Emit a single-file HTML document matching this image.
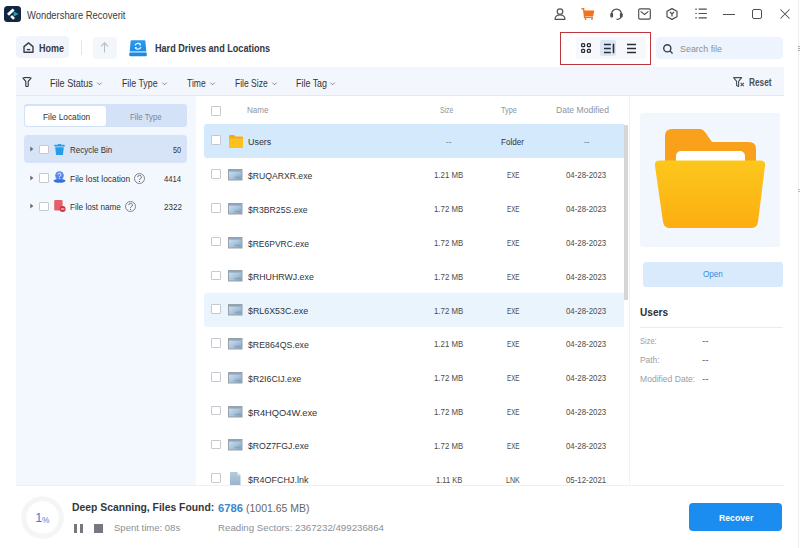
<!DOCTYPE html><html><head><meta charset="utf-8"><style>
*{margin:0;padding:0;box-sizing:border-box}
html,body{width:800px;height:548px;overflow:hidden;background:#fff}
body{position:relative;font-family:"Liberation Sans",sans-serif;color:#333}
.a{position:absolute}
.t{position:absolute;white-space:nowrap;line-height:1;transform-origin:0 0}
svg{position:absolute;overflow:visible}
.cb{position:absolute;width:9.5px;height:9.5px;border:1px solid #c6cad0;border-radius:1px;background:#fff}
</style></head><body>
<div class="a" style="left:4px;top:6px;width:17px;height:16px;background:#0f2743;border-radius:3.5px"></div>
<svg style="left:4px;top:6px" width="17" height="16" viewBox="0 0 17 16"><path d="M9.6 10.4 L14.6 8 L9.6 5.4 Z" fill="#2f9db0"/><path d="M3 7.8 L8.6 2.4 L10.6 4.4 L5 9.8 Z" fill="#fff"/><path d="M6.2 10.9 L8 9.1 L11 12 L9.2 13.8 Z" fill="#fff"/></svg>
<div class="t" style="left:27.10px;top:10.01px;font-size:10.58px;font-weight:normal;color:#3a3a3a;transform:scaleX(0.8875)">Wondershare Recoverit</div>
<svg style="left:554px;top:8px" width="12" height="12" viewBox="0 0 12 12" fill="none" stroke="#4d4d4d" stroke-width="1.15"><circle cx="6" cy="3.6" r="2.8"/><path d="M1 11.3 C1 8.2 3 7 6 7 C9 7 11 8.2 11 11.3 Z" stroke-linejoin="round"/></svg>
<svg style="left:581px;top:8px" width="14" height="12" viewBox="0 0 14 12"><path d="M0.5 0.8 L2.6 0.8 L3.6 9.2 L12 9.2" fill="none" stroke="#f2711c" stroke-width="1.4"/><path d="M3 2.5 L13.3 2.5 L12.2 8 L3.6 8 Z" fill="#f2711c"/><circle cx="4.5" cy="11" r="0.9" fill="#f2711c"/><circle cx="11" cy="11" r="0.9" fill="#f2711c"/></svg>
<svg style="left:610px;top:8px" width="13" height="12" viewBox="0 0 13 12" fill="none" stroke="#4d4d4d" stroke-width="1.2"><path d="M1.6 7 L1.6 6 A4.9 4.9 0 0 1 11.4 6 L11.4 7"/><rect x="0.9" y="5.6" width="1.6" height="3.2" rx="0.6" fill="#4d4d4d"/><rect x="10.5" y="5.6" width="1.6" height="3.2" rx="0.6" fill="#4d4d4d"/><path d="M11 8.8 C10.5 10.8 9 11.3 6.5 11.3"/></svg>
<svg style="left:638px;top:8px" width="13" height="12" viewBox="0 0 13 12" fill="none" stroke="#4d4d4d" stroke-width="1.15"><rect x="0.7" y="0.9" width="11.6" height="10.2" rx="1.3"/><path d="M2.6 3.4 L6.5 6.4 L10.4 3.4"/></svg>
<svg style="left:666px;top:8px" width="12" height="12" viewBox="0 0 12 12" fill="none" stroke="#4d4d4d" stroke-width="1.2"><path d="M6 0.6 L11 3.3 L11 8.7 L6 11.4 L1 8.7 L1 3.3 Z" stroke-linejoin="round"/><path d="M4 4 L6 6 L8 4 M6 6 L6 8.6"/></svg>
<svg style="left:695px;top:8px" width="12" height="11" viewBox="0 0 12 11" fill="none" stroke="#4d4d4d" stroke-width="1.2"><path d="M3.6 1.2 H11.8 M3.6 5.5 H11.8 M3.6 9.8 H11.8"/><path d="M0.3 1.2 H1.8 M0.3 5.5 H1.8 M0.3 9.8 H1.8"/></svg>
<div class="a" style="left:723px;top:13.6px;width:11.5px;height:1.1px;background:#505050"></div>
<div class="a" style="left:752px;top:9px;width:10px;height:9.6px;border:1.15px solid #505050;border-radius:2px"></div>
<svg style="left:780px;top:9px" width="10" height="10" viewBox="0 0 10 10" fill="none" stroke="#505050" stroke-width="1.05"><path d="M0.5 0.5 L9.5 9.5 M9.5 0.5 L0.5 9.5"/></svg>
<div class="a" style="left:798px;top:0;width:1px;height:548px;background:#f0f0f0"></div>
<div class="a" style="left:798px;top:46px;width:2px;height:1px;background:#aaa"></div><div class="a" style="left:798px;top:48px;width:2px;height:1px;background:#aaa"></div><div class="a" style="left:798px;top:50px;width:2px;height:1px;background:#aaa"></div>
<div class="a" style="left:798px;top:189px;width:2px;height:1px;background:#bbb"></div><div class="a" style="left:798px;top:191px;width:2px;height:1px;background:#bbb"></div>
<div class="a" style="left:16px;top:36px;width:53px;height:22px;background:#f1f4fb;border-radius:4px"></div>
<svg style="left:23px;top:42px" width="11" height="11" viewBox="0 0 11 11" fill="none" stroke="#3a3f47" stroke-width="1.4" stroke-linejoin="round"><path d="M1 4.6 L5.5 0.9 L10 4.6 L10 10.2 L1 10.2 Z"/><path d="M3.8 7.6 H7.2"/></svg>
<div class="t" style="left:38.70px;top:43.78px;font-size:10.14px;font-weight:bold;color:#353a40;transform:scaleX(0.8877)">Home</div>
<div class="a" style="left:81px;top:40px;width:1px;height:15px;background:#e3e6ea"></div>
<div class="a" style="left:93px;top:37px;width:24px;height:22px;background:#f3f6fb;border-radius:4px"></div>
<svg style="left:100px;top:42px" width="9" height="11" viewBox="0 0 9 11" fill="none" stroke="#b9bec6" stroke-width="1.1"><path d="M4.5 10.5 V1 M1 4.3 L4.5 0.8 L8 4.3"/></svg>
<svg style="left:129px;top:39.5px" width="18" height="17" viewBox="0 0 18 17"><defs><linearGradient id="dg" x1="0" y1="0" x2="0" y2="1"><stop offset="0" stop-color="#2a9af0"/><stop offset="1" stop-color="#1d8ae6"/></linearGradient></defs><path d="M2.6 0.2 H15.4 Q16.2 0.2 16.4 1 L17.3 11.6 H0.7 L1.6 1 Q1.8 0.2 2.6 0.2 Z" fill="url(#dg)"/><rect x="0.7" y="11.6" width="16.6" height="0.8" fill="#9fe3fb"/><rect x="0.2" y="12.6" width="17.6" height="3.6" rx="1.2" fill="#1e8ae4"/><path d="M6.1 5.4 A3 3 0 0 1 11.6 4.8 M11.9 7 A3 3 0 0 1 6.4 7.6" fill="none" stroke="#dff3ff" stroke-width="1.3"/><path d="M11.9 3.2 L12.1 5.5 L9.8 5.3 Z M6.1 9.2 L5.9 6.9 L8.2 7.1 Z" fill="#dff3ff"/></svg>
<div class="t" style="left:155.30px;top:43.78px;font-size:10.14px;font-weight:bold;color:#33373d;transform:scaleX(0.8978)">Hard Drives and Locations</div>
<div class="a" style="left:560px;top:32.2px;width:91px;height:33px;border:1.8px solid #bf353c"></div>
<div class="a" style="left:576px;top:37px;width:70px;height:22px;background:#f6f8fc;border-radius:3px"></div>
<div class="a" style="left:600px;top:40px;width:16px;height:16px;background:#dde5f8;border-radius:2px"></div>
<svg style="left:581px;top:43px" width="10" height="10" viewBox="0 0 10 10" fill="none" stroke="#2a2e33" stroke-width="1.3"><rect x="0.6" y="0.6" width="3" height="3" rx="0.9"/><rect x="6.4" y="0.6" width="3" height="3" rx="0.9"/><rect x="0.6" y="6.4" width="3" height="3" rx="0.9"/><rect x="6.4" y="6.4" width="3" height="3" rx="0.9"/></svg>
<svg style="left:604px;top:43.5px" width="11" height="10" viewBox="0 0 11 10" fill="none" stroke="#2a2e33" stroke-width="1.45"><path d="M0 0.5 H6.8 M0 4.5 H6.8 M0 8.5 H6.8"/><path d="M9.5 -0.3 V9.3" stroke-width="1.6"/></svg>
<svg style="left:627px;top:43.5px" width="10" height="10" viewBox="0 0 10 10" fill="none" stroke="#2a2e33" stroke-width="1.45"><path d="M0 0.5 H9 M0 4.5 H9 M0 8.5 H9"/></svg>
<div class="a" style="left:656px;top:37px;width:127px;height:22px;background:#eef4fd;border-radius:4px"></div>
<svg style="left:663px;top:44px" width="11" height="10" viewBox="0 0 11 10" fill="none" stroke="#3a3f47" stroke-width="1.4"><circle cx="4.3" cy="4.3" r="3.6"/><path d="M7 7 L9.6 9.4"/></svg>
<div class="t" style="left:679.75px;top:44.41px;font-size:9.93px;font-weight:normal;color:#8a8f96;transform:scaleX(0.8963)">Search file</div>
<div class="a" style="left:16px;top:67px;width:768px;height:29px;background:#f3f7fd"></div>
<div class="a" style="left:16px;top:95px;width:768px;height:1px;background:#e4e9f1"></div>
<svg style="left:22px;top:77px" width="10" height="10" viewBox="0 0 10 10" fill="none" stroke="#2f3338" stroke-width="1.1" stroke-linejoin="round"><path d="M0.6 0.6 L3.8 4.4 V8.9 Q3.8 9.5 4.4 9.5 H5.6 Q6.2 9.5 6.2 8.9 V4.4 L9.4 0.6"/><path d="M1.6 0.6 H8.4"/></svg>
<div class="t" style="left:49.60px;top:78.98px;font-size:10.14px;font-weight:normal;color:#333;transform:scaleX(0.8960)">File Status</div>
<svg style="left:96.6px;top:81.6px" width="5" height="3.5" viewBox="0 0 5 3.5" fill="none" stroke="#777" stroke-width="0.9"><path d="M0.3 0.6 L2.5 2.8 L4.7 0.6"/></svg>
<div class="t" style="left:122.00px;top:78.98px;font-size:10.14px;font-weight:normal;color:#333;transform:scaleX(0.8686)">File Type</div>
<svg style="left:161.6px;top:81.6px" width="5" height="3.5" viewBox="0 0 5 3.5" fill="none" stroke="#777" stroke-width="0.9"><path d="M0.3 0.6 L2.5 2.8 L4.7 0.6"/></svg>
<div class="t" style="left:187.00px;top:78.98px;font-size:10.14px;font-weight:normal;color:#333;transform:scaleX(0.8447)">Time</div>
<svg style="left:210px;top:81.6px" width="5" height="3.5" viewBox="0 0 5 3.5" fill="none" stroke="#777" stroke-width="0.9"><path d="M0.3 0.6 L2.5 2.8 L4.7 0.6"/></svg>
<div class="t" style="left:235.00px;top:78.98px;font-size:10.14px;font-weight:normal;color:#333;transform:scaleX(0.8420)">File Size</div>
<svg style="left:271.6px;top:81.6px" width="5" height="3.5" viewBox="0 0 5 3.5" fill="none" stroke="#777" stroke-width="0.9"><path d="M0.3 0.6 L2.5 2.8 L4.7 0.6"/></svg>
<div class="t" style="left:296.40px;top:78.98px;font-size:10.14px;font-weight:normal;color:#333;transform:scaleX(0.8788)">File Tag</div>
<svg style="left:330.4px;top:81.6px" width="5" height="3.5" viewBox="0 0 5 3.5" fill="none" stroke="#777" stroke-width="0.9"><path d="M0.3 0.6 L2.5 2.8 L4.7 0.6"/></svg>
<svg style="left:733px;top:77px" width="12" height="10" viewBox="0 0 12 10" fill="none" stroke="#4a4f57" stroke-width="1.1" stroke-linejoin="round"><path d="M0.6 0.6 H8.6 L5.6 4.4 V9.4 L3.6 8.4 V4.4 Z"/><path d="M7.6 5.8 L10.8 9.2 M10.8 5.8 L7.6 9.2"/></svg>
<div class="t" style="left:749.20px;top:77.98px;font-size:10.14px;font-weight:bold;color:#4a4f57;transform:scaleX(0.8190)">Reset</div>
<div class="a" style="left:16px;top:96px;width:180px;height:389px;background:#f3f8fe"></div>
<div class="a" style="left:24px;top:104px;width:163px;height:23px;background:#d4e2f8;border-radius:3px"></div>
<div class="a" style="left:25px;top:105.5px;width:80.5px;height:20px;background:#fff;border-radius:3px"></div>
<div class="t" style="left:42.50px;top:112.22px;font-size:9.86px;font-weight:normal;color:#2f3338;transform:scaleX(0.8448)">File Location</div>
<div class="t" style="left:129.50px;top:112.22px;font-size:9.86px;font-weight:normal;color:#7d8696;transform:scaleX(0.7970)">File Type</div>
<div class="a" style="left:24px;top:135px;width:163px;height:28px;background:#d7e4f8;border-radius:4px"></div>
<svg style="left:29.8px;top:146.1px" width="4" height="6" viewBox="0 0 4 6"><path d="M0.3 0.5 L3.3 3 L0.3 5.5 Z" fill="#666"/></svg>
<div class="cb" style="left:39px;top:144.5px"></div>
<div class="t" style="left:69.50px;top:145.42px;font-size:9.86px;font-weight:normal;color:#2f3338;transform:scaleX(0.8117)">Recycle Bin</div>
<div class="t" style="left:172.50px;top:145.42px;font-size:9.86px;font-weight:normal;color:#2f3338;transform:scaleX(0.7408)">50</div>
<svg style="left:29.8px;top:174.6px" width="4" height="6" viewBox="0 0 4 6"><path d="M0.3 0.5 L3.3 3 L0.3 5.5 Z" fill="#666"/></svg>
<div class="cb" style="left:39px;top:173px"></div>
<div class="t" style="left:69.50px;top:173.92px;font-size:9.86px;font-weight:normal;color:#2f3338;transform:scaleX(0.8530)">File lost location</div>
<div class="t" style="left:163.50px;top:173.92px;font-size:9.86px;font-weight:normal;color:#2f3338;transform:scaleX(0.7804)">4414</div>
<svg style="left:133.8px;top:172.5px" width="11" height="11" viewBox="0 0 11 11"><circle cx="5.5" cy="5.5" r="5" fill="none" stroke="#777" stroke-width="0.9"/><path d="M3.8 4.2 A1.8 1.8 0 1 1 6.2 5.8 C5.6 6.1 5.5 6.4 5.5 7" fill="none" stroke="#666" stroke-width="0.9"/><circle cx="5.5" cy="8.4" r="0.6" fill="#666"/></svg>
<svg style="left:29.8px;top:203.1px" width="4" height="6" viewBox="0 0 4 6"><path d="M0.3 0.5 L3.3 3 L0.3 5.5 Z" fill="#666"/></svg>
<div class="cb" style="left:39px;top:201.5px"></div>
<div class="t" style="left:69.50px;top:202.42px;font-size:9.86px;font-weight:normal;color:#2f3338;transform:scaleX(0.8293)">File lost name</div>
<div class="t" style="left:163.50px;top:202.42px;font-size:9.86px;font-weight:normal;color:#2f3338;transform:scaleX(0.8168)">2322</div>
<svg style="left:125px;top:201px" width="11" height="11" viewBox="0 0 11 11"><circle cx="5.5" cy="5.5" r="5" fill="none" stroke="#777" stroke-width="0.9"/><path d="M3.8 4.2 A1.8 1.8 0 1 1 6.2 5.8 C5.6 6.1 5.5 6.4 5.5 7" fill="none" stroke="#666" stroke-width="0.9"/><circle cx="5.5" cy="8.4" r="0.6" fill="#666"/></svg>
<svg style="left:54px;top:144px" width="11" height="11" viewBox="0 0 11 11"><rect x="0.3" y="0.8" width="10.4" height="1.8" rx="0.5" fill="#2a9be8"/><rect x="4" y="0" width="3" height="1.2" fill="#2a9be8"/><path d="M1.2 3.3 H9.8 L9 10.4 Q8.9 11 8.2 11 H2.8 Q2.1 11 2 10.4 Z" fill="#2a9be8"/></svg>
<svg style="left:53px;top:171px" width="13" height="12" viewBox="0 0 13 12"><ellipse cx="6.5" cy="9.8" rx="6" ry="2" fill="#3a6fd8"/><circle cx="6.5" cy="4.6" r="4.3" fill="#5a86e6"/><path d="M5 3.7 A1.5 1.5 0 1 1 7 5 C6.6 5.2 6.5 5.5 6.5 6" fill="none" stroke="#fff" stroke-width="0.9"/><circle cx="6.5" cy="7.2" r="0.5" fill="#fff"/></svg>
<svg style="left:54px;top:200px" width="12" height="12" viewBox="0 0 12 12"><rect x="0.2" y="0" width="8.4" height="10.6" rx="1" fill="#e4606a"/><circle cx="8.6" cy="9" r="3" fill="#d0333f"/><rect x="6.9" y="8.5" width="3.4" height="1" fill="#fff"/></svg>
<div class="cb" style="left:211px;top:106px"></div>
<div class="t" style="left:247.00px;top:105.22px;font-size:9.86px;font-weight:normal;color:#8e949c;transform:scaleX(0.8214)">Name</div>
<div class="t" style="left:439.50px;top:105.22px;font-size:9.86px;font-weight:normal;color:#8e949c;transform:scaleX(0.6862)">Size</div>
<div class="t" style="left:501.25px;top:105.22px;font-size:9.86px;font-weight:normal;color:#8e949c;transform:scaleX(0.7432)">Type</div>
<div class="t" style="left:555.50px;top:105.22px;font-size:9.86px;font-weight:normal;color:#8e949c;transform:scaleX(0.8712)">Date Modified</div>
<div class="a" style="left:204px;top:124px;width:420px;height:34px;background:#d4eafc;border-radius:3px 0 0 3px"></div>
<div class="a" style="left:204px;top:293px;width:420px;height:34px;background:#e9f4fd;border-radius:3px 0 0 3px"></div>
<div class="cb" style="left:211px;top:135.4px"></div>
<svg style="left:228.5px;top:134.5px" width="14" height="13" viewBox="0 0 14 13"><path d="M0 1 Q0 0 1 0 H5 L6.5 1.6 H13 Q14 1.6 14 2.6 V12 Q14 13 13 13 H1 Q0 13 0 12 Z" fill="#f7a81b"/><path d="M0 3.6 H14 V12 Q14 13 13 13 H1 Q0 13 0 12 Z" fill="#fcc21b"/></svg>
<div class="t" style="left:248.00px;top:137.11px;font-size:9.93px;font-weight:normal;color:#2f3338;transform:scaleX(0.8979)">Users</div>
<div class="t" style="left:445.93px;top:137.69px;font-size:8.48px;font-weight:normal;color:#777;transform:scaleX(0.9879)">--</div>
<div class="t" style="left:501.27px;top:137.69px;font-size:8.48px;font-weight:normal;color:#333;transform:scaleX(0.9614)">Folder</div>
<div class="t" style="left:583.62px;top:137.69px;font-size:8.48px;font-weight:normal;color:#777;transform:scaleX(0.9879)">--</div>
<div class="cb" style="left:211px;top:169.2px"></div>
<svg style="left:228px;top:169px" width="14.5" height="11.5" viewBox="0 0 14.5 11.5"><defs><linearGradient id="eg1" x1="0" y1="0" x2="1" y2="1"><stop offset="0" stop-color="#d3e3f2"/><stop offset="0.55" stop-color="#a9c4dc"/><stop offset="1" stop-color="#7d9dbb"/></linearGradient></defs><rect x="0.5" y="0.5" width="13.5" height="10.5" fill="url(#eg1)" stroke="#98a2ab" stroke-width="1"/><rect x="1" y="1" width="12.5" height="1.6" fill="#8ea6bd"/><rect x="6.5" y="7.6" width="6" height="1.6" fill="#7f97ad" opacity="0.6"/></svg>
<div class="t" style="left:248.00px;top:170.91px;font-size:9.93px;font-weight:normal;color:#2f3338;transform:scaleX(0.8700)">$RUQARXR.exe</div>
<div class="t" style="left:434.05px;top:171.49px;font-size:8.48px;font-weight:normal;color:#4d4d4d;transform:scaleX(0.9251)">1.21 MB</div>
<div class="t" style="left:506.50px;top:171.49px;font-size:8.48px;font-weight:normal;color:#4d4d4d;transform:scaleX(0.7400)">EXE</div>
<div class="t" style="left:566.30px;top:171.49px;font-size:8.48px;font-weight:normal;color:#4d4d4d;transform:scaleX(0.9264)">04-28-2023</div>
<div class="cb" style="left:211px;top:203px"></div>
<svg style="left:228px;top:202.8px" width="14.5" height="11.5" viewBox="0 0 14.5 11.5"><defs><linearGradient id="eg2" x1="0" y1="0" x2="1" y2="1"><stop offset="0" stop-color="#d3e3f2"/><stop offset="0.55" stop-color="#a9c4dc"/><stop offset="1" stop-color="#7d9dbb"/></linearGradient></defs><rect x="0.5" y="0.5" width="13.5" height="10.5" fill="url(#eg2)" stroke="#98a2ab" stroke-width="1"/><rect x="1" y="1" width="12.5" height="1.6" fill="#8ea6bd"/><rect x="6.5" y="7.6" width="6" height="1.6" fill="#7f97ad" opacity="0.6"/></svg>
<div class="t" style="left:248.00px;top:204.71px;font-size:9.93px;font-weight:normal;color:#2f3338;transform:scaleX(0.8712)">$R3BR25S.exe</div>
<div class="t" style="left:434.05px;top:205.29px;font-size:8.48px;font-weight:normal;color:#4d4d4d;transform:scaleX(0.9251)">1.72 MB</div>
<div class="t" style="left:506.50px;top:205.29px;font-size:8.48px;font-weight:normal;color:#4d4d4d;transform:scaleX(0.7400)">EXE</div>
<div class="t" style="left:566.30px;top:205.29px;font-size:8.48px;font-weight:normal;color:#4d4d4d;transform:scaleX(0.9264)">04-28-2023</div>
<div class="cb" style="left:211px;top:236.8px"></div>
<svg style="left:228px;top:236.6px" width="14.5" height="11.5" viewBox="0 0 14.5 11.5"><defs><linearGradient id="eg3" x1="0" y1="0" x2="1" y2="1"><stop offset="0" stop-color="#d3e3f2"/><stop offset="0.55" stop-color="#a9c4dc"/><stop offset="1" stop-color="#7d9dbb"/></linearGradient></defs><rect x="0.5" y="0.5" width="13.5" height="10.5" fill="url(#eg3)" stroke="#98a2ab" stroke-width="1"/><rect x="1" y="1" width="12.5" height="1.6" fill="#8ea6bd"/><rect x="6.5" y="7.6" width="6" height="1.6" fill="#7f97ad" opacity="0.6"/></svg>
<div class="t" style="left:248.00px;top:238.51px;font-size:9.93px;font-weight:normal;color:#2f3338;transform:scaleX(0.8573)">$RE6PVRC.exe</div>
<div class="t" style="left:434.05px;top:239.09px;font-size:8.48px;font-weight:normal;color:#4d4d4d;transform:scaleX(0.9251)">1.72 MB</div>
<div class="t" style="left:506.50px;top:239.09px;font-size:8.48px;font-weight:normal;color:#4d4d4d;transform:scaleX(0.7400)">EXE</div>
<div class="t" style="left:566.30px;top:239.09px;font-size:8.48px;font-weight:normal;color:#4d4d4d;transform:scaleX(0.9264)">04-28-2023</div>
<div class="cb" style="left:211px;top:270.6px"></div>
<svg style="left:228px;top:270.4px" width="14.5" height="11.5" viewBox="0 0 14.5 11.5"><defs><linearGradient id="eg4" x1="0" y1="0" x2="1" y2="1"><stop offset="0" stop-color="#d3e3f2"/><stop offset="0.55" stop-color="#a9c4dc"/><stop offset="1" stop-color="#7d9dbb"/></linearGradient></defs><rect x="0.5" y="0.5" width="13.5" height="10.5" fill="url(#eg4)" stroke="#98a2ab" stroke-width="1"/><rect x="1" y="1" width="12.5" height="1.6" fill="#8ea6bd"/><rect x="6.5" y="7.6" width="6" height="1.6" fill="#7f97ad" opacity="0.6"/></svg>
<div class="t" style="left:248.00px;top:272.31px;font-size:9.93px;font-weight:normal;color:#2f3338;transform:scaleX(0.8859)">$RHUHRWJ.exe</div>
<div class="t" style="left:434.05px;top:272.89px;font-size:8.48px;font-weight:normal;color:#4d4d4d;transform:scaleX(0.9251)">1.72 MB</div>
<div class="t" style="left:506.50px;top:272.89px;font-size:8.48px;font-weight:normal;color:#4d4d4d;transform:scaleX(0.7400)">EXE</div>
<div class="t" style="left:566.30px;top:272.89px;font-size:8.48px;font-weight:normal;color:#4d4d4d;transform:scaleX(0.9264)">04-28-2023</div>
<div class="cb" style="left:211px;top:304.4px"></div>
<svg style="left:228px;top:304.2px" width="14.5" height="11.5" viewBox="0 0 14.5 11.5"><defs><linearGradient id="eg5" x1="0" y1="0" x2="1" y2="1"><stop offset="0" stop-color="#d3e3f2"/><stop offset="0.55" stop-color="#a9c4dc"/><stop offset="1" stop-color="#7d9dbb"/></linearGradient></defs><rect x="0.5" y="0.5" width="13.5" height="10.5" fill="url(#eg5)" stroke="#98a2ab" stroke-width="1"/><rect x="1" y="1" width="12.5" height="1.6" fill="#8ea6bd"/><rect x="6.5" y="7.6" width="6" height="1.6" fill="#7f97ad" opacity="0.6"/></svg>
<div class="t" style="left:248.00px;top:306.11px;font-size:9.93px;font-weight:normal;color:#2f3338;transform:scaleX(0.8927)">$RL6X53C.exe</div>
<div class="t" style="left:434.05px;top:306.69px;font-size:8.48px;font-weight:normal;color:#4d4d4d;transform:scaleX(0.9251)">1.72 MB</div>
<div class="t" style="left:506.50px;top:306.69px;font-size:8.48px;font-weight:normal;color:#4d4d4d;transform:scaleX(0.7400)">EXE</div>
<div class="t" style="left:566.30px;top:306.69px;font-size:8.48px;font-weight:normal;color:#4d4d4d;transform:scaleX(0.9264)">04-28-2023</div>
<div class="cb" style="left:211px;top:338.2px"></div>
<svg style="left:228px;top:338px" width="14.5" height="11.5" viewBox="0 0 14.5 11.5"><defs><linearGradient id="eg6" x1="0" y1="0" x2="1" y2="1"><stop offset="0" stop-color="#d3e3f2"/><stop offset="0.55" stop-color="#a9c4dc"/><stop offset="1" stop-color="#7d9dbb"/></linearGradient></defs><rect x="0.5" y="0.5" width="13.5" height="10.5" fill="url(#eg6)" stroke="#98a2ab" stroke-width="1"/><rect x="1" y="1" width="12.5" height="1.6" fill="#8ea6bd"/><rect x="6.5" y="7.6" width="6" height="1.6" fill="#7f97ad" opacity="0.6"/></svg>
<div class="t" style="left:248.00px;top:339.91px;font-size:9.93px;font-weight:normal;color:#2f3338;transform:scaleX(0.8829)">$RE864QS.exe</div>
<div class="t" style="left:434.05px;top:340.49px;font-size:8.48px;font-weight:normal;color:#4d4d4d;transform:scaleX(0.9251)">1.21 MB</div>
<div class="t" style="left:506.50px;top:340.49px;font-size:8.48px;font-weight:normal;color:#4d4d4d;transform:scaleX(0.7400)">EXE</div>
<div class="t" style="left:566.30px;top:340.49px;font-size:8.48px;font-weight:normal;color:#4d4d4d;transform:scaleX(0.9264)">04-28-2023</div>
<div class="cb" style="left:211px;top:372px"></div>
<svg style="left:228px;top:371.8px" width="14.5" height="11.5" viewBox="0 0 14.5 11.5"><defs><linearGradient id="eg7" x1="0" y1="0" x2="1" y2="1"><stop offset="0" stop-color="#d3e3f2"/><stop offset="0.55" stop-color="#a9c4dc"/><stop offset="1" stop-color="#7d9dbb"/></linearGradient></defs><rect x="0.5" y="0.5" width="13.5" height="10.5" fill="url(#eg7)" stroke="#98a2ab" stroke-width="1"/><rect x="1" y="1" width="12.5" height="1.6" fill="#8ea6bd"/><rect x="6.5" y="7.6" width="6" height="1.6" fill="#7f97ad" opacity="0.6"/></svg>
<div class="t" style="left:248.00px;top:373.71px;font-size:9.93px;font-weight:normal;color:#2f3338;transform:scaleX(0.8846)">$R2I6CIJ.exe</div>
<div class="t" style="left:434.05px;top:374.29px;font-size:8.48px;font-weight:normal;color:#4d4d4d;transform:scaleX(0.9251)">1.72 MB</div>
<div class="t" style="left:506.50px;top:374.29px;font-size:8.48px;font-weight:normal;color:#4d4d4d;transform:scaleX(0.7400)">EXE</div>
<div class="t" style="left:566.30px;top:374.29px;font-size:8.48px;font-weight:normal;color:#4d4d4d;transform:scaleX(0.9264)">04-28-2023</div>
<div class="cb" style="left:211px;top:405.8px"></div>
<svg style="left:228px;top:405.6px" width="14.5" height="11.5" viewBox="0 0 14.5 11.5"><defs><linearGradient id="eg8" x1="0" y1="0" x2="1" y2="1"><stop offset="0" stop-color="#d3e3f2"/><stop offset="0.55" stop-color="#a9c4dc"/><stop offset="1" stop-color="#7d9dbb"/></linearGradient></defs><rect x="0.5" y="0.5" width="13.5" height="10.5" fill="url(#eg8)" stroke="#98a2ab" stroke-width="1"/><rect x="1" y="1" width="12.5" height="1.6" fill="#8ea6bd"/><rect x="6.5" y="7.6" width="6" height="1.6" fill="#7f97ad" opacity="0.6"/></svg>
<div class="t" style="left:248.00px;top:407.51px;font-size:9.93px;font-weight:normal;color:#2f3338;transform:scaleX(0.9372)">$R4HQO4W.exe</div>
<div class="t" style="left:434.05px;top:408.09px;font-size:8.48px;font-weight:normal;color:#4d4d4d;transform:scaleX(0.9251)">1.72 MB</div>
<div class="t" style="left:506.50px;top:408.09px;font-size:8.48px;font-weight:normal;color:#4d4d4d;transform:scaleX(0.7400)">EXE</div>
<div class="t" style="left:566.30px;top:408.09px;font-size:8.48px;font-weight:normal;color:#4d4d4d;transform:scaleX(0.9264)">04-28-2023</div>
<div class="cb" style="left:211px;top:439.6px"></div>
<svg style="left:228px;top:439.4px" width="14.5" height="11.5" viewBox="0 0 14.5 11.5"><defs><linearGradient id="eg9" x1="0" y1="0" x2="1" y2="1"><stop offset="0" stop-color="#d3e3f2"/><stop offset="0.55" stop-color="#a9c4dc"/><stop offset="1" stop-color="#7d9dbb"/></linearGradient></defs><rect x="0.5" y="0.5" width="13.5" height="10.5" fill="url(#eg9)" stroke="#98a2ab" stroke-width="1"/><rect x="1" y="1" width="12.5" height="1.6" fill="#8ea6bd"/><rect x="6.5" y="7.6" width="6" height="1.6" fill="#7f97ad" opacity="0.6"/></svg>
<div class="t" style="left:248.00px;top:441.31px;font-size:9.93px;font-weight:normal;color:#2f3338;transform:scaleX(0.8763)">$ROZ7FGJ.exe</div>
<div class="t" style="left:434.05px;top:441.89px;font-size:8.48px;font-weight:normal;color:#4d4d4d;transform:scaleX(0.9251)">1.72 MB</div>
<div class="t" style="left:506.50px;top:441.89px;font-size:8.48px;font-weight:normal;color:#4d4d4d;transform:scaleX(0.7400)">EXE</div>
<div class="t" style="left:566.30px;top:441.89px;font-size:8.48px;font-weight:normal;color:#4d4d4d;transform:scaleX(0.9264)">04-28-2023</div>
<div class="cb" style="left:211px;top:473.4px"></div>
<svg style="left:230px;top:472px" width="10.5" height="14" viewBox="0 0 10.5 14"><defs><linearGradient id="lg" x1="0" y1="0" x2="0" y2="1"><stop offset="0" stop-color="#b6cadd"/><stop offset="1" stop-color="#98b2cb"/></linearGradient></defs><path d="M0 0.6 Q0 0 0.6 0 H7.2 L10.5 3.3 V13.4 Q10.5 14 9.9 14 H0.6 Q0 14 0 13.4 Z" fill="url(#lg)"/><path d="M7.2 0 V3.3 H10.5 Z" fill="#dbe6f0"/></svg>
<div class="t" style="left:248.00px;top:475.11px;font-size:9.93px;font-weight:normal;color:#2f3338;transform:scaleX(0.9064)">$R4OFCHJ.lnk</div>
<div class="t" style="left:435.55px;top:475.69px;font-size:8.48px;font-weight:normal;color:#4d4d4d;transform:scaleX(0.8876)">1.11 KB</div>
<div class="t" style="left:505.90px;top:475.69px;font-size:8.48px;font-weight:normal;color:#4d4d4d;transform:scaleX(0.8321)">LNK</div>
<div class="t" style="left:566.30px;top:475.69px;font-size:8.48px;font-weight:normal;color:#4d4d4d;transform:scaleX(0.9264)">05-12-2021</div>
<div class="a" style="left:624px;top:125px;width:4px;height:175px;background:#d6d6d6"></div>
<div class="a" style="left:629px;top:96px;width:1px;height:389px;background:#f0f2f5"></div>
<div class="a" style="left:640px;top:112.6px;width:140px;height:134px;background:#f2f7fd;border-radius:3px"></div>
<svg style="left:654px;top:129px" width="112" height="100" viewBox="0 0 112 100"><defs><linearGradient id="fg" x1="0" y1="0" x2="0" y2="1"><stop offset="0" stop-color="#fdc71c"/><stop offset="1" stop-color="#fcae12"/></linearGradient></defs>
<path d="M11 7 Q11 0 18 0 H46 Q49 0 51 3 L58 13 H95 Q102 13 102 20 V60 H11 Z" fill="#f9a11b"/>
<rect x="22" y="22" width="69" height="30" rx="5" fill="#fff"/>
<path d="M1 37 Q0 31.5 6 31.5 H106 Q112 31.5 111 37 L104 93 Q103 99 97 99 H16 Q10 99 9 93 Z" fill="url(#fg)"/>
</svg>
<div class="a" style="left:643px;top:262px;width:140px;height:25px;background:#d8eafb;border-radius:3px"></div>
<div class="t" style="left:702.80px;top:271.38px;font-size:8.26px;font-weight:normal;color:#3b8ddb;transform:scaleX(0.9809)">Open</div>
<div class="t" style="left:640.20px;top:307.00px;font-size:11.30px;font-weight:bold;color:#2b2f35;transform:scaleX(0.8933)">Users</div>
<div class="a" style="left:640px;top:327px;width:143px;height:1px;background:#e8ebef"></div>
<div class="t" style="left:640.20px;top:335.87px;font-size:9.57px;font-weight:normal;color:#9aa0a8;transform:scaleX(0.7815)">Size:</div>
<div class="t" style="left:701.80px;top:336.07px;font-size:9.57px;font-weight:normal;color:#555;transform:scaleX(1.0510)">--</div>
<div class="t" style="left:640.20px;top:354.87px;font-size:9.57px;font-weight:normal;color:#9aa0a8;transform:scaleX(0.8767)">Path:</div>
<div class="t" style="left:701.80px;top:355.07px;font-size:9.57px;font-weight:normal;color:#555;transform:scaleX(1.0510)">--</div>
<div class="t" style="left:640.20px;top:373.77px;font-size:9.57px;font-weight:normal;color:#9aa0a8;transform:scaleX(0.8951)">Modified Date:</div>
<div class="t" style="left:701.80px;top:373.97px;font-size:9.57px;font-weight:normal;color:#555;transform:scaleX(1.0510)">--</div>
<div class="a" style="left:0;top:485px;width:798px;height:63px;background:#fff"></div>
<div class="a" style="left:16px;top:485px;width:768px;height:1px;background:#eef0f4"></div>
<svg style="left:20.5px;top:495.5px" width="43" height="43" viewBox="0 0 43 43"><circle cx="21.5" cy="21.5" r="18.8" fill="none" stroke="#f4f5f7" stroke-width="5"/></svg>
<div class="t" style="left:35.2px;top:512.19px;font-size:12.6px;color:#3f7fd6">1</div>
<div class="t" style="left:41.80px;top:514.85px;font-size:9.71px;font-weight:normal;color:#4a86d8;transform:scaleX(0.8556)">%</div>
<div class="t" style="left:72.00px;top:503.13px;font-size:10.43px;font-weight:bold;color:#33373d;transform:scaleX(0.9944)">Deep Scanning, Files Found:</div>
<div class="t" style="left:217.50px;top:502.86px;font-size:10.58px;font-weight:bold;color:#3a88d2;transform:scaleX(1.0571)">6786</div>
<div class="t" style="left:246.25px;top:502.86px;font-size:10.58px;font-weight:normal;color:#666;transform:scaleX(0.9911)">(1001.65 MB)</div>
<div class="a" style="left:74px;top:524px;width:3px;height:9px;background:#75797f"></div><div class="a" style="left:79.5px;top:524px;width:3px;height:9px;background:#75797f"></div>
<div class="a" style="left:94px;top:524px;width:9px;height:9px;background:#75797f"></div>
<div class="t" style="left:113.75px;top:523.22px;font-size:9.86px;font-weight:normal;color:#8a9098;transform:scaleX(0.9675)">Spent time: 08s</div>
<div class="t" style="left:218.00px;top:523.22px;font-size:9.86px;font-weight:normal;color:#8a9098;transform:scaleX(0.9846)">Reading Sectors: 2367232/499236864</div>
<div class="a" style="left:689px;top:503px;width:93px;height:28px;background:#1b8df0;border-radius:4px"></div>
<div class="t" style="left:718.70px;top:513.25px;font-size:9.71px;font-weight:bold;color:#fff;transform:scaleX(0.8956)">Recover</div>
</body></html>
